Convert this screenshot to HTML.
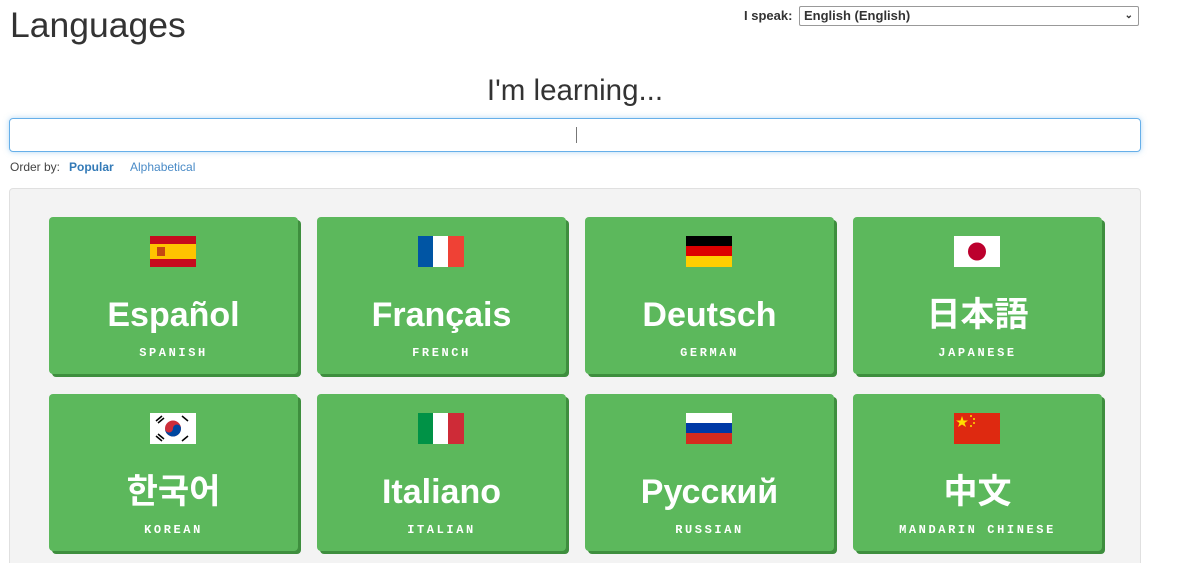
<!DOCTYPE html>
<html><head><meta charset="utf-8"><style>
html,body{margin:0;width:1198px;height:563px;overflow:hidden}
body{background:#fff;font-family:"Liberation Sans",Arial,sans-serif;color:#333;position:relative}
.a{position:absolute}
h1{position:absolute;left:10px;top:5px;margin:0;font-size:35.5px;font-weight:normal;color:#333}
.panel{position:absolute;left:9px;top:188px;width:1130px;height:400px;background:#f3f3f3;border:1px solid #e0e0e0;border-radius:4px}
.card{position:absolute;width:249px;height:157px;background:#5cb85c;border-radius:4px;box-shadow:3px 3px 0 #3e8e3e;color:#fff;text-align:center}
.flag{position:absolute;left:101px;top:19px;width:46px;height:31px}
.t{position:absolute;left:0;right:0;top:77px;font-size:34px;font-weight:bold;line-height:42px;font-family:"Liberation Sans","Noto Sans CJK JP",sans-serif}
.s{position:absolute;left:0;right:0;top:129px;font-size:12px;font-weight:bold;letter-spacing:2.6px;font-family:"Liberation Mono",monospace}
</style></head><body>
<h1>Languages</h1>
<div class="a" style="left:744px;top:8px;font-size:13px;font-weight:bold;color:#333">I speak:</div>
<div class="a" style="left:799px;top:6px;width:340px;border:1px solid #999;border-radius:2px;font-size:13px;font-weight:bold;line-height:18px;padding-left:4px;box-sizing:border-box;height:20px">English (English)<span style="position:absolute;right:5px;top:0;font-size:10px">&#8964;</span></div>
<div class="a" style="left:0;width:1150px;top:74px;text-align:center;font-size:29.5px;color:#333">I'm learning...</div>
<div class="a" style="left:9px;top:118px;width:1132px;height:34px;box-sizing:border-box;border:1px solid #66afe9;border-radius:4px;box-shadow:0 0 6px rgba(102,175,233,.5)"><div class="a" style="left:566px;top:8px;width:1px;height:16px;background:#777"></div></div>
<div class="a" style="left:10px;top:160px;font-size:12px;color:#444">Order by:</div>
<div class="a" style="left:69px;top:160px;font-size:12px;font-weight:bold;color:#337ab7">Popular</div>
<div class="a" style="left:130px;top:160px;font-size:12px;color:#4a8bc7">Alphabetical</div>
<div class="panel"></div>

<div class="card" style="left:49px;top:217px">
<svg class="flag" viewBox="0 0 46 31"><rect width="46" height="31" fill="#c60b1e"/><rect y="8" width="46" height="15" fill="#ffc400"/><rect x="7" y="11" width="8" height="9" fill="#ad1519" opacity=".7"/></svg>
<div class="t">Español</div><div class="s">SPANISH</div></div>
<div class="card" style="left:317px;top:217px">
<svg class="flag" viewBox="0 0 46 31"><rect width="16" height="31" fill="#0055a4"/><rect x="15" width="16" height="31" fill="#fff"/><rect x="30" width="16" height="31" fill="#ef4135"/></svg>
<div class="t">Français</div><div class="s">FRENCH</div></div>
<div class="card" style="left:585px;top:217px">
<svg class="flag" viewBox="0 0 46 31"><rect width="46" height="11" fill="#000"/><rect y="10" width="46" height="11" fill="#dd0000"/><rect y="20" width="46" height="11" fill="#ffce00"/></svg>
<div class="t">Deutsch</div><div class="s">GERMAN</div></div>
<div class="card" style="left:853px;top:217px">
<svg class="flag" viewBox="0 0 46 31"><rect width="46" height="31" fill="#fff"/><circle cx="23" cy="15.5" r="9" fill="#bc002d"/></svg>
<div class="t">日本語</div><div class="s">JAPANESE</div></div>

<div class="card" style="left:49px;top:394px">
<svg class="flag" viewBox="0 0 46 31"><rect width="46" height="31" fill="#fff"/><circle cx="23" cy="15.5" r="8" fill="#cd2e3a"/><path d="M15 15.5a8 8 0 0 0 16 0a4 4 0 0 0-8 0a4 4 0 0 1-8 0z" fill="#0047a0"/><g stroke="#000" stroke-width="1.5"><path d="M6 8l6-5M8 10l6-5M32 3l6 5M32 28l6-5M6 23l6 5M8 21l6 5"/></g></svg>
<div class="t">한국어</div><div class="s">KOREAN</div></div>
<div class="card" style="left:317px;top:394px">
<svg class="flag" viewBox="0 0 46 31"><rect width="16" height="31" fill="#009246"/><rect x="15" width="16" height="31" fill="#fff"/><rect x="30" width="16" height="31" fill="#ce2b37"/></svg>
<div class="t">Italiano</div><div class="s">ITALIAN</div></div>
<div class="card" style="left:585px;top:394px">
<svg class="flag" viewBox="0 0 46 31"><rect width="46" height="11" fill="#fff"/><rect y="10" width="46" height="11" fill="#0039a6"/><rect y="20" width="46" height="11" fill="#d52b1e"/></svg>
<div class="t">Русский</div><div class="s">RUSSIAN</div></div>
<div class="card" style="left:853px;top:394px">
<svg class="flag" viewBox="0 0 46 31"><rect width="46" height="31" fill="#de2910"/><polygon points="8,3 9.5,7.5 14,7.5 10.5,10 12,14 8,11.5 4,14 5.5,10 2,7.5 6.5,7.5" fill="#ffde00"/><g fill="#ffde00"><circle cx="17" cy="3" r="1"/><circle cx="20" cy="6" r="1"/><circle cx="20" cy="10" r="1"/><circle cx="17" cy="13" r="1"/></g></svg>
<div class="t">中文</div><div class="s">MANDARIN CHINESE</div></div>
</body></html>
